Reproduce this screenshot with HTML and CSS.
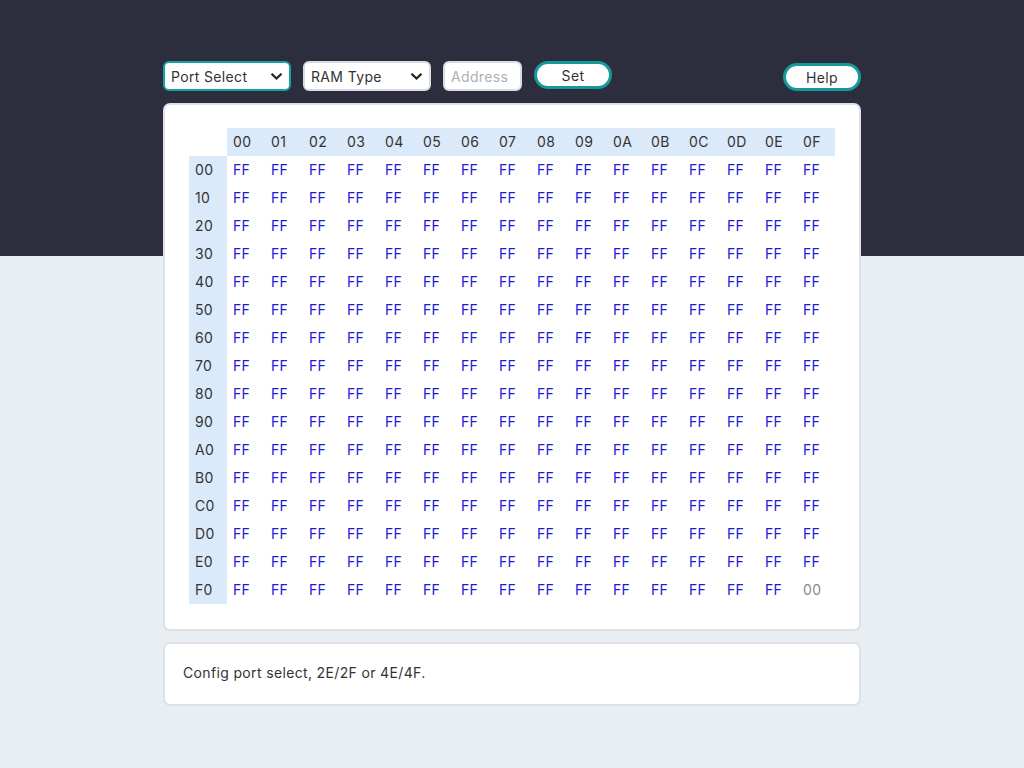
FILE: index.html
```html
<!DOCTYPE html>
<html>
<head>
<meta charset="utf-8">
<link rel="stylesheet" href="styles.css">
</head>
<body>
<div class="page">
  <div class="toolbar">
    <div class="select focused"><span>Port Select</span><svg class="chev" width="13" height="9" viewBox="0 0 13 9"><path d="M1.5 1.8 L6.5 6.6 L11.5 1.8" fill="none" stroke="#222" stroke-width="2.2"/></svg></div>
    <div class="select"><span>RAM Type</span><svg class="chev" width="13" height="9" viewBox="0 0 13 9"><path d="M1.5 1.8 L6.5 6.6 L11.5 1.8" fill="none" stroke="#222" stroke-width="2.2"/></svg></div>
    <input class="address" type="text" placeholder="Address">
    <button class="btn set">Set</button>
    <button class="btn help">Help</button>
  </div>
  <div class="card grid-card">
    <table class="mem" id="mem"></table>
  </div>
  <div class="card info">Config port select, 2E/2F or 4E/4F.</div>
</div>
<script src="app.js"></script>
</body>
</html>
```

FILE: app.js
```js
(function () {
  var t = document.getElementById('mem');
  var hex = '0123456789ABCDEF';
  var h = '<tr><th class="corner"></th>';
  for (var c = 0; c < 16; c++) h += '<th class="colh">0' + hex[c] + '</th>';
  h += '</tr>';
  for (var r = 0; r < 16; r++) {
    h += '<tr><th class="rowh">' + hex[r] + '0</th>';
    for (var c2 = 0; c2 < 16; c2++) {
      if (r === 15 && c2 === 15) h += '<td class="zero">00</td>';
      else h += '<td>FF</td>';
    }
    h += '</tr>';
  }
  t.innerHTML = h;
})();
```

FILE: styles.css
```css
html, body {
  margin: 0;
  padding: 0;
}
body {
  background: linear-gradient(#2c2e3e 0, #2c2e3e 256px, #e9eef3 256px);
  min-height: 768px;
  font-family: "Inter", "Open Sans", sans-serif;
  font-size: 14px;
  letter-spacing: 0.35px;
  color: #333;
}
.page {
  width: 698px;
  margin: 0 auto;
  padding-top: 61px;
}
.toolbar {
  display: flex;
  align-items: flex-start;
  height: 30px;
  margin-bottom: 12px;
}
.select {
  box-sizing: border-box;
  width: 128px;
  height: 30px;
  background: #fff;
  border: 2px solid #d9dce1;
  border-radius: 6px;
  display: flex;
  align-items: center;
  justify-content: space-between;
  padding: 0 6px 0 6px;
  margin-right: 12px;
  font-size: 14px;
  color: #333;
}
.select.focused {
  border-color: #17a2a6;
}
.address {
  box-sizing: border-box;
  width: 79px;
  height: 30px;
  border: 2px solid #d9dce1;
  border-radius: 6px;
  padding: 0 6px;
  font-family: inherit;
  font-size: 14px;
  letter-spacing: 0.35px;
  margin-right: 12px;
  outline: none;
}
.address::placeholder {
  color: #aab0b8;
}
.btn {
  box-sizing: border-box;
  width: 78px;
  height: 28px;
  background: #fff;
  border: 3px solid #159a9c;
  border-radius: 14px;
  font-family: inherit;
  font-size: 14px;
  letter-spacing: 0.35px;
  color: #333;
  padding: 0;
}
.help {
  margin-left: auto;
  margin-top: 2px;
}
.card {
  box-sizing: border-box;
  background: #fff;
  border: 2px solid #dde2e8;
  border-radius: 7px;
}
.grid-card {
  padding: 23px 24px 24px 24px;
  height: 528px;
  margin-bottom: 11px;
}
.mem {
  border-collapse: collapse;
  border-spacing: 0;
}
.mem th, .mem td {
  width: 32px;
  height: 28px;
  padding: 0 0 0 6px;
  text-align: left;
  font-weight: 400;
  font-size: 14px;
  line-height: 28px;
}
.mem th.corner {
  background: #fff;
}
.mem th.colh, .mem th.rowh {
  background: #dbeafb;
  color: #333;
}
.mem td {
  color: #1c1cd8;
}
.mem td.zero {
  color: #8a8a8a;
}
.info {
  height: 64px;
  display: flex;
  align-items: center;
  padding: 0 18px 3px;
  font-size: 14px;
  color: #333;
}
```
